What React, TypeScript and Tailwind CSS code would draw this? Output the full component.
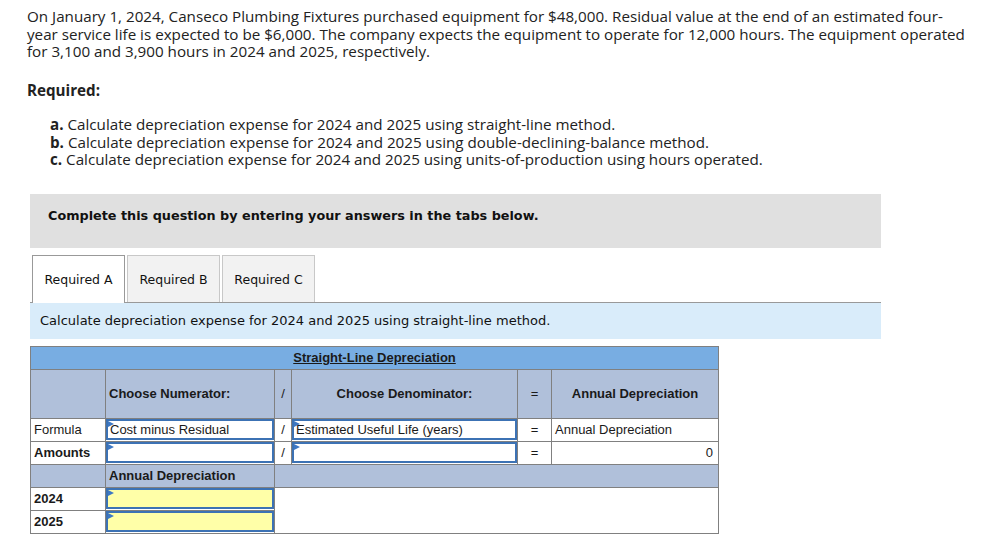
import React from "react";

const body = "font-['Open_Sans',sans-serif] text-[15.2px] leading-[17.5px] text-[#222]";
const verdana = "font-['DejaVu_Sans','Verdana',sans-serif]";
const arial = "font-['Liberation_Sans','Arial',sans-serif]";

function Flag() {
  return (
    <span className="absolute left-0 top-0 h-0 w-0 border-t-[3px] border-b-[3px] border-l-[6px] border-t-transparent border-b-transparent border-l-[#3d78c4]" />
  );
}

function InputBox({ value, yellow }: { value?: string; yellow?: boolean }) {
  return (
    <div
      className={`relative h-[21px] border-2 border-[#3c72b4] ${yellow ? "bg-[#ffffa8]" : "bg-white"} pl-[2px] leading-[17px]`}
    >
      <Flag />
      {value}
    </div>
  );
}

const cell = "border border-[#808080] p-0 h-[23px]";
const head = "bg-[#b0c0da]";

export default function App() {
  return (
    <div className="w-[985px] h-[536px] overflow-hidden bg-white">
      <div className={`${body} pl-[27px] pr-[10px] pt-[8px]`}>
        <p className="whitespace-nowrap">
          On January 1, 2024, Canseco Plumbing Fixtures purchased equipment for $48,000. Residual value at the end of an estimated four-
          <br />
          year service life is expected to be $6,000. The company expects the equipment to operate for 12,000 hours. The equipment operated
          <br />
          for 3,100 and 3,900 hours in 2024 and 2025, respectively.
        </p>
        <p className="mt-[21px] font-bold">Required:</p>
        <ul className="mt-[17px] pl-[23px]">
          <li>
            <b>a.</b> Calculate depreciation expense for 2024 and 2025 using straight-line method.
          </li>
          <li>
            <b>b.</b> Calculate depreciation expense for 2024 and 2025 using double-declining-balance method.
          </li>
          <li>
            <b>c.</b> Calculate depreciation expense for 2024 and 2025 using units-of-production using hours operated.
          </li>
        </ul>
      </div>

      <div className={`${verdana} ml-[30px] w-[851px] mt-[25px]`}>
        <div className="h-[54px] bg-[#e0e0e0] pl-[18px] pb-[9px] flex items-center text-[12.8px] font-bold text-[#111]">
          Complete this question by entering your answers in the tabs below.
        </div>

        <div className="mt-[7px] flex items-end gap-[2px] pl-[2px] border-b border-[#999] h-[48px] text-[12.5px] text-[#111]">
          <div className="h-[48px] w-[93px] bg-white border border-b-0 border-[#999] flex items-center justify-center mb-[-1px] pt-[3px]">
            Required A
          </div>
          <div className="h-[47px] w-[93px] bg-[#f2f2f2] border border-b-0 border-[#c8c8c8] flex items-center justify-center pt-[4px]">
            Required B
          </div>
          <div className="h-[47px] w-[93px] bg-[#f2f2f2] border border-b-0 border-[#c8c8c8] flex items-center justify-center pt-[4px]">
            Required C
          </div>
        </div>

        <div className="h-[36px] bg-[#d9ecfa] pl-[10px] pt-[1px] flex items-center text-[13px] text-[#111]">
          Calculate depreciation expense for 2024 and 2025 using straight-line method.
        </div>
      </div>

      <table className={`${arial} ml-[30px] mt-[7px] w-[688px] table-fixed border-collapse text-[13px] text-[#1a1a1a]`}>
        <colgroup>
          <col className="w-[75px]" />
          <col className="w-[169px]" />
          <col className="w-[17px]" />
          <col className="w-[226px]" />
          <col className="w-[34px]" />
          <col className="w-[167px]" />
        </colgroup>
        <tbody>
          <tr>
            <td colSpan={6} className={`${cell} bg-[#78ade2] text-center font-bold underline`}>
              Straight-Line Depreciation
            </td>
          </tr>
          <tr className="h-[49px]">
            <td className={`${cell} ${head}`} />
            <td className={`${cell} ${head} pl-[3px] font-bold`}>Choose Numerator:</td>
            <td className={`${cell} ${head} text-center`}>/</td>
            <td className={`${cell} ${head} text-center font-bold`}>Choose Denominator:</td>
            <td className={`${cell} ${head} text-center`}>=</td>
            <td className={`${cell} ${head} text-center font-bold`}>Annual Depreciation</td>
          </tr>
          <tr>
            <td className={`${cell} pl-[3px]`}>Formula</td>
            <td className={cell}>
              <InputBox value="Cost minus Residual" />
            </td>
            <td className={`${cell} text-center`}>/</td>
            <td className={cell}>
              <InputBox value="Estimated Useful Life (years)" />
            </td>
            <td className={`${cell} text-center`}>=</td>
            <td className={`${cell} pl-[3px]`}>Annual Depreciation</td>
          </tr>
          <tr>
            <td className={`${cell} pl-[3px] font-bold`}>Amounts</td>
            <td className={cell}>
              <InputBox />
            </td>
            <td className={`${cell} text-center`}>/</td>
            <td className={cell}>
              <InputBox />
            </td>
            <td className={`${cell} text-center`}>=</td>
            <td className={`${cell} pr-[5px] text-right`}>0</td>
          </tr>
          <tr>
            <td className={`${cell} ${head}`} />
            <td className={`${cell} ${head} pl-[3px] font-bold`}>Annual Depreciation</td>
            <td colSpan={4} className={`${cell} ${head}`} />
          </tr>
          <tr>
            <td className={`${cell} pl-[3px] font-bold`}>2024</td>
            <td className={cell}>
              <InputBox yellow />
            </td>
            <td colSpan={4} rowSpan={2} className={`${cell} bg-white`} />
          </tr>
          <tr>
            <td className={`${cell} pl-[3px] font-bold`}>2025</td>
            <td className={cell}>
              <InputBox yellow />
            </td>
          </tr>
        </tbody>
      </table>
    </div>
  );
}
